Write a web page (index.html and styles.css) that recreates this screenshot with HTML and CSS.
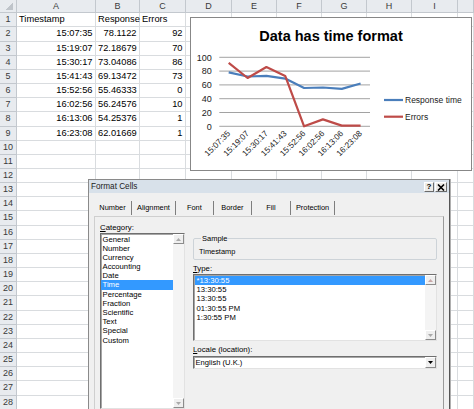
FILE: index.html
```html
<!DOCTYPE html>
<html>
<head>
<meta charset="utf-8">
<link rel="stylesheet" href="styles.css">
</head>
<body>
<div class="sheet">
<div class="ch corner"></div><div class="ch">A</div><div class="ch">B</div><div class="ch">C</div><div class="ch">D</div><div class="ch">E</div><div class="ch">F</div><div class="ch">G</div><div class="ch">H</div><div class="ch">I</div><div class="ch"></div>
<div class="rh">1</div><div>Timestamp</div><div>Response</div><div>Errors</div><div></div><div></div><div></div><div></div><div></div><div></div><div></div>
<div class="rh">2</div><div class="n">15:07:35</div><div class="n">78.1122</div><div class="n">92</div><div></div><div></div><div></div><div></div><div></div><div></div><div></div>
<div class="rh">3</div><div class="n">15:19:07</div><div class="n">72.18679</div><div class="n">70</div><div></div><div></div><div></div><div></div><div></div><div></div><div></div>
<div class="rh">4</div><div class="n">15:30:17</div><div class="n">73.04086</div><div class="n">86</div><div></div><div></div><div></div><div></div><div></div><div></div><div></div>
<div class="rh">5</div><div class="n">15:41:43</div><div class="n">69.13472</div><div class="n">73</div><div></div><div></div><div></div><div></div><div></div><div></div><div></div>
<div class="rh">6</div><div class="n">15:52:56</div><div class="n">55.46333</div><div class="n">0</div><div></div><div></div><div></div><div></div><div></div><div></div><div></div>
<div class="rh">7</div><div class="n">16:02:56</div><div class="n">56.24576</div><div class="n">10</div><div></div><div></div><div></div><div></div><div></div><div></div><div></div>
<div class="rh">8</div><div class="n">16:13:06</div><div class="n">54.25376</div><div class="n">1</div><div></div><div></div><div></div><div></div><div></div><div></div><div></div>
<div class="rh">9</div><div class="n">16:23:08</div><div class="n">62.01669</div><div class="n">1</div><div></div><div></div><div></div><div></div><div></div><div></div><div></div>
<div class="rh">10</div><div></div><div></div><div></div><div></div><div></div><div></div><div></div><div></div><div></div><div></div>
<div class="rh">11</div><div></div><div></div><div></div><div></div><div></div><div></div><div></div><div></div><div></div><div></div>
<div class="rh">12</div><div></div><div></div><div></div><div></div><div></div><div></div><div></div><div></div><div></div><div></div>
<div class="rh">13</div><div></div><div></div><div></div><div></div><div></div><div></div><div></div><div></div><div></div><div></div>
<div class="rh">14</div><div></div><div></div><div></div><div></div><div></div><div></div><div></div><div></div><div></div><div></div>
<div class="rh">15</div><div></div><div></div><div></div><div></div><div></div><div></div><div></div><div></div><div></div><div></div>
<div class="rh">16</div><div></div><div></div><div></div><div></div><div></div><div></div><div></div><div></div><div></div><div></div>
<div class="rh">17</div><div></div><div></div><div></div><div></div><div></div><div></div><div></div><div></div><div></div><div></div>
<div class="rh">18</div><div></div><div></div><div></div><div></div><div></div><div></div><div></div><div></div><div></div><div></div>
<div class="rh">19</div><div></div><div></div><div></div><div></div><div></div><div></div><div></div><div></div><div></div><div></div>
<div class="rh">20</div><div></div><div></div><div></div><div></div><div></div><div></div><div></div><div></div><div></div><div></div>
<div class="rh">21</div><div></div><div></div><div></div><div></div><div></div><div></div><div></div><div></div><div></div><div></div>
<div class="rh">22</div><div></div><div></div><div></div><div></div><div></div><div></div><div></div><div></div><div></div><div></div>
<div class="rh">23</div><div></div><div></div><div></div><div></div><div></div><div></div><div></div><div></div><div></div><div></div>
<div class="rh">24</div><div></div><div></div><div></div><div></div><div></div><div></div><div></div><div></div><div></div><div></div>
<div class="rh">25</div><div></div><div></div><div></div><div></div><div></div><div></div><div></div><div></div><div></div><div></div>
<div class="rh">26</div><div></div><div></div><div></div><div></div><div></div><div></div><div></div><div></div><div></div><div></div>
<div class="rh">27</div><div></div><div></div><div></div><div></div><div></div><div></div><div></div><div></div><div></div><div></div>
<div class="rh">28</div><div></div><div></div><div></div><div></div><div></div><div></div><div></div><div></div><div></div><div></div>
</div>

<div class="chart">
<svg width="280" height="152" viewBox="0 0 280 152">
  <text x="140" y="22.5" text-anchor="middle" class="ctitle">Data has time format</text>
  <g stroke="#8a8a8a" stroke-width="0.8">
    <line x1="28.3" y1="39.3" x2="179" y2="39.3"/>
    <line x1="28.3" y1="53.1" x2="179" y2="53.1"/>
    <line x1="28.3" y1="66.9" x2="179" y2="66.9"/>
    <line x1="28.3" y1="80.7" x2="179" y2="80.7"/>
    <line x1="28.3" y1="94.5" x2="179" y2="94.5"/>
    <line x1="28.3" y1="108.3" x2="179" y2="108.3"/>
  </g>
  <g class="ylab" text-anchor="end">
    <text x="20.7" y="42.5">100</text>
    <text x="20.7" y="56.3">80</text>
    <text x="20.7" y="70.1">60</text>
    <text x="20.7" y="83.9">40</text>
    <text x="20.7" y="97.7">20</text>
    <text x="20.7" y="111.5">0</text>
  </g>
  <g class="xlab" text-anchor="end">
    <text transform="translate(39.7 116) rotate(-45)">15:07:35</text>
    <text transform="translate(58.6 116) rotate(-45)">15:19:07</text>
    <text transform="translate(77.4 116) rotate(-45)">15:30:17</text>
    <text transform="translate(96.2 116) rotate(-45)">15:41:43</text>
    <text transform="translate(115.1 116) rotate(-45)">15:52:56</text>
    <text transform="translate(133.9 116) rotate(-45)">16:02:56</text>
    <text transform="translate(152.8 116) rotate(-45)">16:13:06</text>
    <text transform="translate(171.6 116) rotate(-45)">16:23:08</text>
  </g>
  <polyline fill="none" stroke="#4a7ebb" stroke-width="2.2" stroke-linejoin="round" points="37.7,54.4 56.6,58.5 75.4,57.9 94.2,60.6 113.1,70.0 131.9,69.5 150.8,70.9 169.6,65.5"/>
  <polyline fill="none" stroke="#be4b48" stroke-width="2.2" stroke-linejoin="round" points="37.7,44.8 56.6,60.0 75.4,49.0 94.2,57.9 113.1,108.3 131.9,101.4 150.8,107.6 169.6,107.6"/>
  <line x1="193" y1="82" x2="212" y2="82" stroke="#4a7ebb" stroke-width="2.2"/>
  <text x="214" y="85" class="leg">Response time</text>
  <line x1="193" y1="98.7" x2="212" y2="98.7" stroke="#be4b48" stroke-width="2.2"/>
  <text x="214" y="101.7" class="leg">Errors</text>
</svg>
</div>

<div class="dialog">
  <div class="titlebar">
    <span class="title">Format Cells</span>
    <div class="tbtns">
      <span class="tb help">?</span>
      <span class="tb close"><svg width="8" height="7" viewBox="0 0 8 7"><path d="M1 0.5 L7 6.5 M7 0.5 L1 6.5" stroke="#000" stroke-width="1.6"/></svg></span>
    </div>
  </div>
  <div class="body">
    <div class="tabs">
      <span class="tab">Number</span>
      <span class="tab">Alignment</span>
      <span class="tab wide">Font</span>
      <span class="tab">Border</span>
      <span class="tab fill">Fill</span>
      <span class="tab">Protection</span>
    </div>
    <div class="panel">
      <div class="col-left">
        <div class="label"><u>C</u>ategory:</div>
        <div class="listbox cat">
          <div class="items">
            <div class="item">General</div>
            <div class="item">Number</div>
            <div class="item">Currency</div>
            <div class="item">Accounting</div>
            <div class="item">Date</div>
            <div class="item sel">Time</div>
            <div class="item">Percentage</div>
            <div class="item">Fraction</div>
            <div class="item">Scientific</div>
            <div class="item">Text</div>
            <div class="item">Special</div>
            <div class="item">Custom</div>
          </div>
          <div class="sb">
            <div class="sbtn"><svg width="5" height="3" viewBox="0 0 5 3"><path d="M0 3 L2.5 0 L5 3 Z" fill="#a9a9a9"/></svg></div>
            <div class="track"></div>
            <div class="sbtn"><svg width="5" height="3" viewBox="0 0 5 3"><path d="M0 0 L2.5 3 L5 0 Z" fill="#a9a9a9"/></svg></div>
          </div>
        </div>
      </div>
      <div class="col-right">
        <fieldset class="sample">
          <legend>Sample</legend>
          <div class="sample-val">Timestamp</div>
        </fieldset>
        <div class="label type-label"><u>T</u>ype:</div>
        <div class="listbox types">
          <div class="items">
            <div class="item sel">*13:30:55</div>
            <div class="item">13:30:55</div>
            <div class="item">13:30:55</div>
            <div class="item">01:30:55 PM</div>
            <div class="item">1:30:55 PM</div>
          </div>
          <div class="sb">
            <div class="sbtn"><svg width="5" height="3" viewBox="0 0 5 3"><path d="M0 3 L2.5 0 L5 3 Z" fill="#c8a8a8"/></svg></div>
            <div class="track"></div>
            <div class="sbtn"><svg width="5" height="3" viewBox="0 0 5 3"><path d="M0 0 L2.5 3 L5 0 Z" fill="#a9a9a9"/></svg></div>
          </div>
        </div>
        <div class="label locale-label"><u>L</u>ocale (location):</div>
        <div class="select">
          <span class="select-val">English (U.K.)</span>
          <span class="sbtn drop"><svg width="5" height="3" viewBox="0 0 5 3"><path d="M0 0 L2.5 3 L5 0 Z" fill="#000"/></svg></span>
        </div>
      </div>
    </div>
  </div>
</div>
</body>
</html>
```

FILE: styles.css
```css
html, body {
  margin: 0;
  padding: 0;
}
body {
  width: 474px;
  height: 409px;
  overflow: hidden;
  position: relative;
  background: #ffffff;
  font-family: "Liberation Sans", Arial, sans-serif;
}

/* spreadsheet grid */
.sheet {
  display: grid;
  grid-template-columns: 17px 79px 44px 46px 46px 45px 45px 45px 45px 46px 16px;
  grid-template-rows: 13.3px;
  grid-auto-rows: 14.17px;
  width: 474px;
  height: 409px;
  overflow: hidden;
}
.sheet > div {
  box-sizing: border-box;
  border-right: 1px solid #d9dcdf;
  border-bottom: 1px solid #d9dcdf;
  font-size: 9.3px;
  line-height: 13px;
  padding: 0 2px;
  white-space: nowrap;
  color: #000;
}
.sheet > .n {
  text-align: right;
  padding-right: 2.5px;
}
.sheet > .ch {
  background: #e8ebef;
  border-color: #c3c8ce;
  text-align: center;
  color: #3a3a3a;
  font-size: 9px;
  line-height: 12.3px;
  padding: 0;
}
.sheet > .corner {
  background: linear-gradient(135deg, transparent 50%, #bfc4ca 50%) no-repeat 6px 3px / 7px 7px, #e8ebef;
}
.sheet > .rh {
  background: #e8ebef;
  border-color: #c3c8ce;
  text-align: center;
  color: #3a3a3a;
  font-size: 9px;
  padding: 0;
}

/* chart */
.chart {
  position: absolute;
  left: 190px;
  top: 17px;
  width: 282px;
  height: 154px;
  box-sizing: border-box;
  border: 1px solid #878787;
  background: #fff;
}
.chart svg {
  display: block;
  font-family: "Liberation Sans", Arial, sans-serif;
}
.ctitle {
  font-size: 14.5px;
  font-weight: bold;
  fill: #000;
}
.ylab text {
  font-size: 9px;
  fill: #222;
}
.xlab text {
  font-size: 8.3px;
  fill: #222;
}
.leg {
  font-size: 8.5px;
  fill: #222;
}

/* dialog */
.dialog {
  position: absolute;
  left: 88px;
  top: 179px;
  width: 362px;
  height: 230px;
  box-sizing: border-box;
  border: 1px solid #8a8a8a;
  border-bottom: none;
  border-right-color: #555;
  background: #f0f0f0;
  color: #000;
  font-size: 7.5px;
  box-shadow: 1px 0 0 #b0b0b0;
}
.titlebar {
  height: 13px;
  background: #d8e1ea;
  display: flex;
  align-items: center;
  justify-content: space-between;
  padding: 0 2px 0 2px;
}
.title {
  font-size: 8.2px;
  color: #1c1c1c;
}
.tbtns {
  display: flex;
  gap: 1px;
  margin-top: 1px;
}
.tb {
  box-sizing: border-box;
  height: 10px;
  border: 1px solid;
  border-color: #ffffff #6b6b6b #6b6b6b #ffffff;
  background: #ecebe8;
  font-size: 8px;
  font-weight: bold;
  line-height: 8px;
  text-align: center;
  display: flex;
  align-items: center;
  justify-content: center;
}
.help {
  width: 10px;
}
.close {
  width: 12px;
}
.body {
  padding: 7px 5px 0 5px;
}
.tabs {
  display: flex;
  height: 16px;
  align-items: center;
}
.tab {
  min-width: 38px;
  box-sizing: border-box;
  padding: 0 5px;
  text-align: center;
  font-size: 7.4px;
  line-height: 14px;
  border-right: 1px solid #7e7e7e;
}
.tab.fill {
  min-width: 39px;
}
.panel {
  box-sizing: border-box;
  height: 193px;
  border: 1px solid #cfcfcf;
  border-bottom: none;
  border-right-color: #9a9a9a;
  display: flex;
  gap: 8px;
  padding: 6px 6px 0 5px;
  overflow: hidden;
}
.col-left {
  width: 85px;
  flex: none;
}
.col-right {
  flex: 1;
  min-width: 0;
}
.label {
  height: 9px;
  line-height: 9px;
  font-size: 7.8px;
  white-space: nowrap;
}
.listbox {
  box-sizing: border-box;
  display: flex;
  background: #fff;
  border: 1px solid;
  border-color: #6f6f6f #e2e2e2 #e2e2e2 #6f6f6f;
  box-shadow: inset 1px 1px 0 #a6a6a6;
}
.listbox.cat {
  margin-top: 1px;
  height: 176px;
}
.items {
  flex: 1;
  min-width: 0;
  padding-top: 0.5px;
}
.types .items {
  padding-top: 1px;
  padding-left: 1px;
}
.item {
  height: 9.2px;
  line-height: 9.2px;
  padding-left: 1.5px;
  font-size: 7.7px;
  white-space: nowrap;
}
.item.sel {
  background: #3399ff;
  color: #fff;
}
.sb {
  width: 11px;
  flex: none;
  display: flex;
  flex-direction: column;
  background: #f4f4f4;
}
.sbtn {
  height: 10px;
  box-sizing: border-box;
  border: 1px solid;
  border-color: #ffffff #8c8c8c #8c8c8c #ffffff;
  background: #efefef;
  display: flex;
  align-items: center;
  justify-content: center;
}
.sbtn svg {
  display: block;
}
.track {
  flex: 1;
}
.sample {
  margin: 10.5px 0 0 0;
  padding: 4.5px 5px 3px 5px;
  border: 1px solid #cdd3d8;
  border-radius: 2px;
  min-inline-size: 0;
}
.sample legend {
  padding: 0 1px;
  margin-left: 2px;
  line-height: 9px;
  font-size: 7.5px;
}
.sample-val {
  height: 9px;
  line-height: 9px;
  font-size: 7.4px;
}
.type-label {
  margin-top: 4px;
}
.listbox.types {
  margin-top: 1px;
  height: 67px;
}
.locale-label {
  margin-top: 3.5px;
}
.select {
  margin-top: 2.5px;
  height: 13px;
  box-sizing: border-box;
  display: flex;
  align-items: stretch;
  background: #fff;
  border: 1px solid;
  border-color: #6f6f6f #e2e2e2 #e2e2e2 #6f6f6f;
  box-shadow: inset 1px 1px 0 #a6a6a6;
}
.select-val {
  flex: 1;
  padding-left: 1.5px;
  line-height: 11px;
  font-size: 7.6px;
}
.sbtn.drop {
  width: 11px;
  height: auto;
}
```
